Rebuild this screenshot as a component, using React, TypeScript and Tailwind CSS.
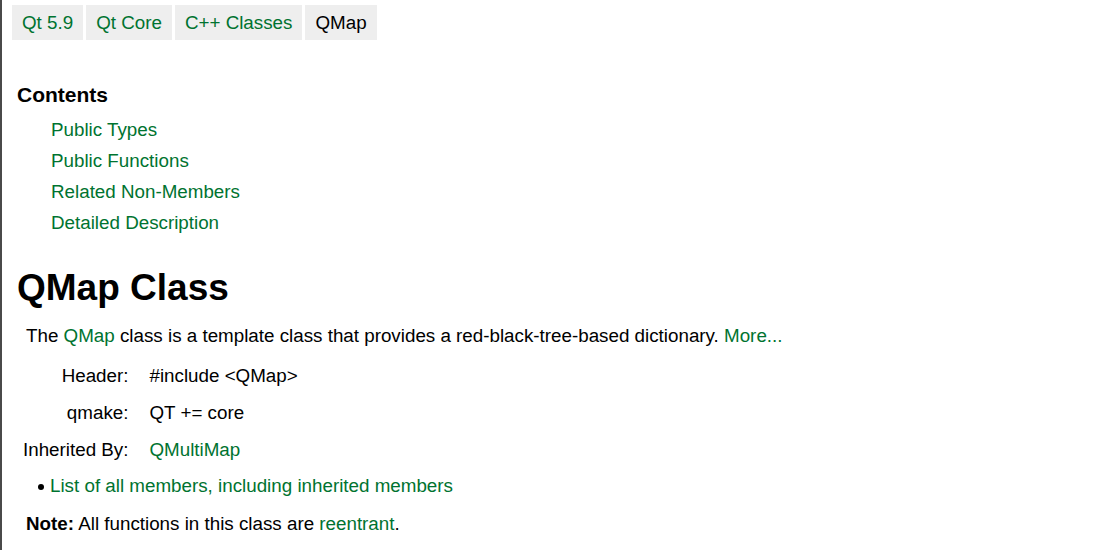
import React from "react";

const LINK = "text-[#007330]";

const crumbs = [
  { label: "Qt 5.9", link: true },
  { label: "Qt Core", link: true },
  { label: "C++ Classes", link: true },
  { label: "QMap", link: false },
];

const toc = ["Public Types", "Public Functions", "Related Non-Members", "Detailed Description"];

export default function App() {
  return (
    <div
      className="min-h-[550px] border-l-2 border-[#4a4a4a] bg-white text-black text-[18.8px]"
      style={{ fontFamily: '"Liberation Sans", Arial, sans-serif' }}
    >
      <nav className="flex gap-[3px] pl-[10px] pt-[5px]">
        {crumbs.map((c) => (
          <span
            key={c.label}
            className={`flex h-[35px] items-center bg-[#eeeeee] px-[10px] pt-[1px] ${c.link ? LINK : "text-black"}`}
          >
            {c.label}
          </span>
        ))}
      </nav>

      <div className="pl-[15px]">
        <h2 className="mt-[43px] text-[21px] font-bold leading-[24px]">Contents</h2>
        <ul className="mt-[7px] pl-[34px]">
          {toc.map((t) => (
            <li key={t} className={`h-[31px] leading-[31px] ${LINK}`}>
              {t}
            </li>
          ))}
        </ul>

        <h1 className="mt-[30px] text-[37px] font-bold leading-[40px]">QMap Class</h1>

        <div className="pl-[9px]">
          <p className="mt-[16px] leading-[24px]">
            The <span className={LINK}>QMap</span> class is a template class that provides a
            red-black-tree-based dictionary. <span className={LINK}>More...</span>
          </p>

          <table className="mt-[10px] -ml-[3px]">
            <tbody>
              <tr className="h-[37px]">
                <td className="pr-[21px] text-right">Header:</td>
                <td>#include &lt;QMap&gt;</td>
              </tr>
              <tr className="h-[37px]">
                <td className="pr-[21px] text-right">qmake:</td>
                <td>QT += core</td>
              </tr>
              <tr className="h-[37px]">
                <td className="pr-[21px] text-right">Inherited By:</td>
                <td className={LINK}>QMultiMap</td>
              </tr>
            </tbody>
          </table>

          <ul className="pl-[12px]">
            <li className="flex h-[35px] items-center gap-[6px]">
              <span className="h-[6px] w-[6px] rounded-full bg-black" />
              <span className={LINK}>List of all members, including inherited members</span>
            </li>
          </ul>

          <p className="leading-[40px]">
            <b>Note:</b> All functions in this class are <span className={LINK}>reentrant</span>.
          </p>
        </div>
      </div>
    </div>
  );
}
